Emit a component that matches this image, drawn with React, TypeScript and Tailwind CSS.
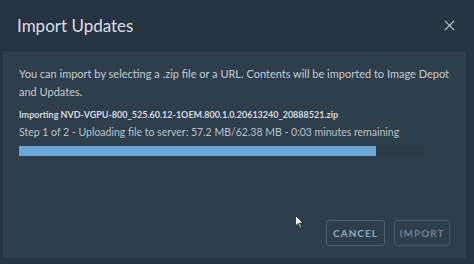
import React from "react";

export default function App() {
  return (
    <div
      className="relative w-[474px] h-[264px] overflow-hidden bg-[#263340] text-[#c5ced6]"
      style={{ fontFamily: "Lato, 'Noto Sans', sans-serif" }}
    >
      <div className="flex items-center justify-between h-[51px] pl-[17px] pr-[18px]">
        <h1 className="text-[17px] text-[#d9dfe4] leading-none">Import Updates</h1>
        <svg width="11" height="11" viewBox="0 0 12 12" className="mr-[1px]">
          <path d="M1 1L11 11M11 1L1 11" stroke="#c3ccd3" strokeWidth="1.3" />
        </svg>
      </div>
      <div className="ml-[3px] mr-[8px] h-[207px] bg-[#2f3e4b] flex flex-col pl-[16px] pr-[8px] pt-[14px]">
        <p className="text-[11px] leading-[18px] text-[#c3ccd3]">
          You can import by selecting a .zip file or a URL. Contents will be imported to Image Depot and Updates.
        </p>
        <p className="mt-[7px] text-[9px] leading-[14px] font-bold text-[#d3dae0]">
          Importing NVD-VGPU-800_525.60.12-1OEM.800.1.0.20613240_20888521.zip
        </p>
        <p className="mt-[2px] text-[10.5px] leading-[16px] text-[#b9c3cc]">
          Step 1 of 2 - Uploading file to server: 57.2 MB/62.38 MB - 0:03 minutes remaining
        </p>
        <div className="mt-[6px] w-[405px] h-[10px] bg-[#2c3a46] flex">
          <div className="h-full w-[357px] bg-[#6aa8da]" />
        </div>
        <div className="mt-auto mb-[12px] flex justify-end gap-[9px] pr-[8px]">
          <button className="w-[59px] h-[26px] border border-[#4c6274] rounded-[3px] text-[10px] font-bold tracking-[1px] text-[#8aaac2]">
            CANCEL
          </button>
          <button className="w-[56px] h-[26px] border border-[#46596a] rounded-[3px] text-[10px] font-bold tracking-[1px] text-[#6c7f8e]">
            IMPORT
          </button>
        </div>
      </div>
      <svg className="absolute left-[295px] top-[215px]" width="9" height="14" viewBox="0 0 9 14">
        <path d="M0.5 0.5L0.5 11L3 8.5L5 13L6.5 12.3L4.6 8L8 8Z" fill="#f4f6f8" stroke="#222" strokeWidth="0.8" />
      </svg>
    </div>
  );
}
